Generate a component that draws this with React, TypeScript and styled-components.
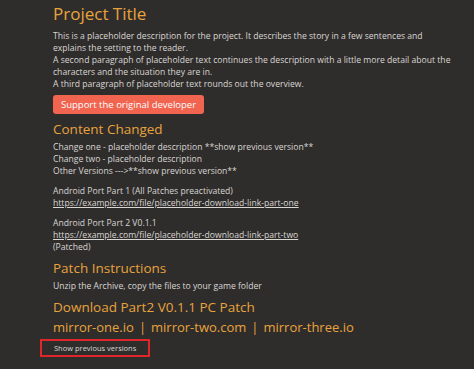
import styled, { createGlobalStyle } from 'styled-components';

const GlobalStyle = createGlobalStyle`
  html, body {
    margin: 0;
    padding: 0;
    background: #2f2d2c;
  }
`;

const Page = styled.div`
  width: 474px;
  height: 369px;
  overflow: hidden;
  background: #2f2d2c;
  font-family: "Open Sans", "Liberation Sans", sans-serif;
  color: #d9d6d2;
  font-size: 8.6px;
  line-height: 12px;
  padding: 3px 0 0 53px;
  box-sizing: border-box;
`;

const Title = styled.h1`
  margin: 0 0 5px;
  font-size: 17px;
  line-height: 22px;
  font-weight: 400;
  color: #e8a33c;
`;

const Heading = styled.h2`
  margin: 6px 0 3px;
  font-size: 13.5px;
  line-height: 18px;
  font-weight: 400;
  color: #e8a33c;
`;

const Text = styled.p`
  margin: 0;
  max-width: 400px;
`;

const Gap = styled.div`
  height: 8px;
`;

const Button = styled.button`
  margin-top: 5px;
  border: 0;
  border-radius: 3px;
  padding: 4px 8px;
  background: #f06450;
  color: #fff;
  font-family: inherit;
  font-size: 9.5px;
  line-height: 11px;
  cursor: pointer;
`;

const Link = styled.a`
  display: block;
  color: #d9d6d2;
  text-decoration: underline;
`;

const LinkRow = styled.div`
  display: flex;
  gap: 5px;
  white-space: nowrap;
  font-size: 13px;
  line-height: 17px;
  color: #e8a33c;

  a {
    color: #e8a33c;
    text-decoration: none;
  }
`;

const Outlined = styled.div`
  display: inline-block;
  margin-top: 3px;
  margin-left: -13px;
  padding: 2px 12px;
  border: 2px solid #e0262b;
  font-size: 7.5px;
  line-height: 10px;
`;

export default function App() {
  return (
    <>
      <GlobalStyle />
      <Page>
        <Title>Project Title</Title>
        <Text>
          This is a placeholder description for the project. It describes the story in a few
          sentences and explains the setting to the reader.
        </Text>
        <Text>
          A second paragraph of placeholder text continues the description with a little more
          detail about the characters and the situation they are in.
        </Text>
        <Text>A third paragraph of placeholder text rounds out the overview.</Text>
        <Button>Support the original developer</Button>

        <Heading>Content Changed</Heading>
        <Text>Change one - placeholder description **show previous version**</Text>
        <Text>Change two - placeholder description</Text>
        <Text>Other Versions ---&gt;**show previous version**</Text>
        <Gap />
        <Text>Android Port Part 1 (All Patches preactivated)</Text>
        <Link href="#">https://example.com/file/placeholder-download-link-part-one</Link>
        <Gap />
        <Text>Android Port Part 2 V0.1.1</Text>
        <Link href="#">https://example.com/file/placeholder-download-link-part-two</Link>
        <Text>(Patched)</Text>

        <Heading>Patch Instructions</Heading>
        <Text>Unzip the Archive, copy the files to your game folder</Text>

        <Heading>Download Part2 V0.1.1 PC Patch</Heading>
        <LinkRow>
          <a href="#">mirror-one.io</a>|<a href="#">mirror-two.com</a>|<a href="#">mirror-three.io</a>
        </LinkRow>
        <Outlined>Show previous versions</Outlined>
      </Page>
    </>
  );
}
